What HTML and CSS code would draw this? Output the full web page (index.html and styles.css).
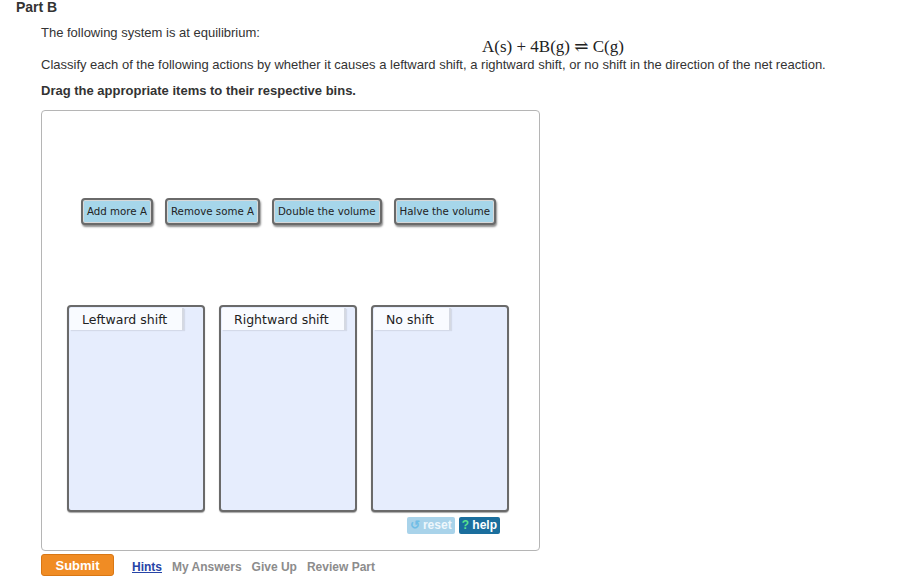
FILE: index.html
```html
<!DOCTYPE html>
<html lang="en">
<head>
  <meta charset="UTF-8">
  <title>Part B</title>
  <link rel="stylesheet" href="styles.css">
</head>
<body>

  <h2 class="part-title">Part B</h2>

  <div class="question">
    <p class="intro first">The following system is at equilibrium:</p>
    <div class="equation">A(s) + 4B(g) &#8652; C(g)</div>
    <p class="intro">Classify each of the following actions by whether it causes a leftward shift, a rightward shift, or no shift in the direction of the net reaction.</p>
    <p class="instruction">Drag the appropriate items to their respective bins.</p>

    <!-- Drag and drop area -->
    <div class="dnd-box">
      <div class="items">
        <div class="item">Add more A</div>
        <div class="item">Remove some A</div>
        <div class="item">Double the volume</div>
        <div class="item">Halve the volume</div>
      </div>

      <div class="bins">
        <div class="bin"><div class="bin-label">Leftward shift</div></div>
        <div class="bin"><div class="bin-label">Rightward shift</div></div>
        <div class="bin"><div class="bin-label">No shift</div></div>
      </div>

      <div class="tools">
        <span class="reset-btn"><span class="reset-icon">&#8634;</span> reset</span>
        <span class="help-btn"><span class="help-icon">?</span> help</span>
      </div>
    </div>

    <!-- Actions -->
    <div class="actions">
      <button class="submit-btn">Submit</button>
      <a class="link active" href="#">Hints</a>
      <span class="link">My Answers</span>
      <span class="link">Give Up</span>
      <span class="link">Review Part</span>
    </div>
  </div>

</body>
</html>
```

FILE: styles.css
```css
body {
  margin: 0;
  font-family: 'Liberation Sans', Arial, sans-serif;
  color: #333;
  background-color: #ffffff;
}
.part-title {
  margin: 0 0 0 16px;
  font-size: 14px;
  line-height: 14px;
  font-weight: bold;
  color: #333;
}
.question {
  padding-left: 41px;
}
.intro {
  margin: 4px 0 0 0;
  font-size: 13px;
  line-height: 15px;
  color: #333;
}
.intro.first {
  margin-top: 11px;
}
.equation {
  font-family: 'Liberation Serif', 'DejaVu Serif', serif;
  font-size: 17px;
  line-height: 13px;
  padding-left: 441px;
  color: #222;
}
.instruction {
  margin: 11px 0 0 0;
  font-size: 13px;
  line-height: 15px;
  font-weight: bold;
  color: #333;
}
/* Drag and drop box */
.dnd-box {
  box-sizing: border-box;
  width: 499px;
  height: 441px;
  margin-top: 12px;
  border: 1px solid #b5b5b5;
  border-radius: 4px;
  display: flex;
  flex-direction: column;
}
.items {
  display: flex;
  gap: 12px;
  margin: 87px 0 0 39px;
}
.item {
  box-sizing: border-box;
  height: 27px;
  padding: 0 4px;
  font-family: Verdana, 'DejaVu Sans', sans-serif;
  font-size: 10.25px;
  line-height: 23px;
  color: #222;
  background-color: #a6d6ea;
  border: 2px solid #6a6a6a;
  border-radius: 4px;
  box-shadow: inset 0 0 0 1px #d8d8d8, 1px 2px 2px rgba(0, 0, 0, 0.45);
}
.bins {
  display: flex;
  gap: 14px;
  margin: 80px 0 0 25px;
}
.bin {
  box-sizing: border-box;
  width: 138px;
  height: 207px;
  background-color: #e6edfd;
  border: 2px solid #6a6a6a;
  border-radius: 4px;
  box-shadow: 0 1px 1px rgba(0, 0, 0, 0.35);
}
.bin-label {
  display: inline-block;
  margin: 1px 0 0 1px;
  padding: 0 15px 0 12px;
  height: 22px;
  font-family: Verdana, 'DejaVu Sans', sans-serif;
  font-size: 12.5px;
  line-height: 24px;
  color: #222;
  background-color: #f9fbff;
  border-right: 2px solid #d5d9e2;
  box-shadow: 1px 1px 1px rgba(0, 0, 0, 0.08);
}
.tools {
  display: flex;
  justify-content: flex-end;
  gap: 4px;
  margin: 5px 39px 0 0;
}
.reset-btn, .help-btn {
  display: inline-block;
  height: 17px;
  padding: 0 3px;
  font-family: 'Liberation Sans', Arial, sans-serif;
  font-size: 12px;
  line-height: 17px;
  font-weight: bold;
  color: #ffffff;
  border-radius: 2px;
}
.reset-btn {
  background-color: #a9d3ea;
  color: #eef7fc;
}
.reset-icon {
  color: #6fbde6;
}
.help-btn {
  background-color: #1b6e9d;
}
.help-icon {
  color: #59e28e;
}
/* Bottom actions */
.actions {
  display: flex;
  align-items: center;
  margin-top: 3px;
}
.submit-btn {
  width: 73px;
  height: 22px;
  padding: 0;
  font-family: 'Liberation Sans', Arial, sans-serif;
  font-size: 13px;
  font-weight: bold;
  color: #ffffff;
  background-color: #f08c24;
  border: 1px solid #d97714;
  border-radius: 3px;
  margin-right: 18px;
}
.link {
  font-size: 12px;
  font-weight: bold;
  color: #8c8c8c;
  margin-right: 10px;
  margin-top: 3px;
  text-decoration: none;
}
.link.active {
  color: #2744a6;
  text-decoration: underline;
}
```
